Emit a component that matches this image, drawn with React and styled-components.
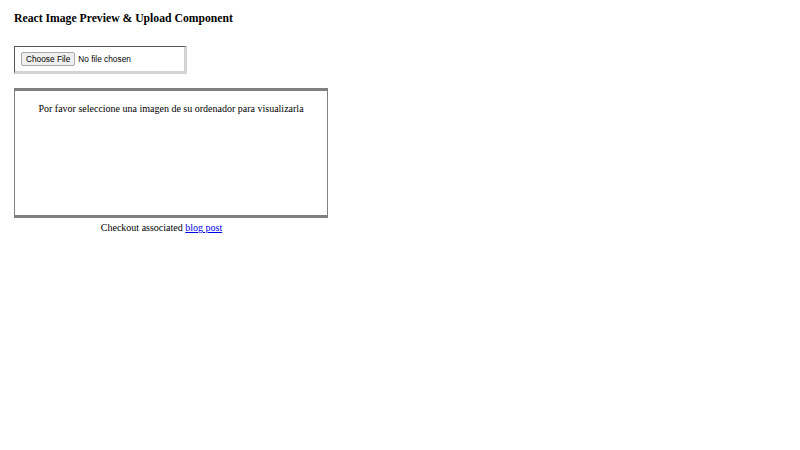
import React from "react";
import styled, { createGlobalStyle } from "styled-components";

const GlobalStyle = createGlobalStyle`
  body {
    margin: 0;
    background: #fff;
    font-family: "Liberation Serif", "Times New Roman", serif;
    color: #000;
  }
`;

export const PreviewComponent = styled.div`
  padding: 12px 0 0 14px;
`;

export const Title = styled.h3`
  margin: 0;
  font-size: 11.7px;
  line-height: 14px;
  font-weight: bold;
`;

export const FileForm = styled.form`
  box-sizing: border-box;
  width: 173px;
  height: 28px;
  margin-top: 20px;
  padding: 6px 6px;
  border-top: 1px solid #555;
  border-left: 1px solid #555;
  border-right: 3px solid #d3d3d3;
  border-bottom: 3px solid #d3d3d3;
  display: flex;
  align-items: center;
`;

export const FileInput = styled.input`
  font-family: "Liberation Sans", Arial, sans-serif;
  font-size: 8.3px;
  color: #000;
  margin: 0;

  &::file-selector-button {
    font-family: inherit;
    font-size: inherit;
    color: #000;
    height: 14px;
    margin-right: 3px;
    padding: 0 4px;
    background: #efefef;
    border: 1px solid #a9a9a9;
    border-radius: 2px;
  }
`;

export const ImgPreview = styled.div`
  box-sizing: border-box;
  width: 314px;
  height: 130px;
  margin-top: 14px;
  border-left: 1px solid gray;
  border-right: 1px solid gray;
  border-top: 3px solid gray;
  border-bottom: 3px solid gray;
  text-align: center;
  font-size: 10px;
`;

export const PreviewText = styled.div`
  margin-top: 12px;
  line-height: 12px;
`;

export const Footer = styled.div`
  width: 295px;
  margin-top: 4px;
  text-align: center;
  font-size: 10px;
  line-height: 12px;

  a {
    color: #0000ee;
  }
`;

export default function App() {
  return (
    <>
      <GlobalStyle />
      <PreviewComponent>
        <Title>React Image Preview &amp; Upload Component</Title>
        <FileForm onSubmit={(e) => e.preventDefault()}>
          <FileInput type="file" />
        </FileForm>
        <ImgPreview>
          <PreviewText>
            Por favor seleccione una imagen de su ordenador para visualizarla
          </PreviewText>
        </ImgPreview>
        <Footer>
          Checkout associated <a href="#">blog post</a>
        </Footer>
      </PreviewComponent>
    </>
  );
}
